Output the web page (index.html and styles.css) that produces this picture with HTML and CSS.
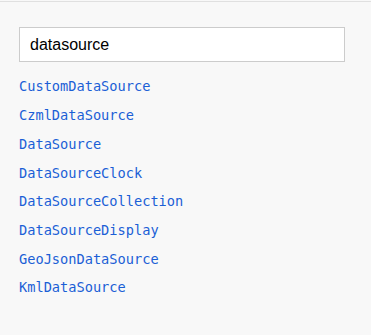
FILE: index.html
```html
<!DOCTYPE html>
<html>
<head>
<meta charset="utf-8">
<link rel="stylesheet" href="styles.css">
</head>
<body>
<div class="panel">
  <input class="search" type="text" value="datasource">
  <ul class="results">
    <li><a href="#">CustomDataSource</a></li>
    <li><a href="#">CzmlDataSource</a></li>
    <li><a href="#">DataSource</a></li>
    <li><a href="#">DataSourceClock</a></li>
    <li><a href="#">DataSourceCollection</a></li>
    <li><a href="#">DataSourceDisplay</a></li>
    <li><a href="#">GeoJsonDataSource</a></li>
    <li><a href="#">KmlDataSource</a></li>
  </ul>
</div>
</body>
</html>
```
FILE: styles.css
```css
html, body {
  margin: 0;
  padding: 0;
  background: #f8f8f8;
  height: 100%;
}
.panel {
  margin-top: 1px;
  border-top: 1px solid #e0e0e0;
  padding: 25px 0 0 19px;
}
.search {
  display: block;
  box-sizing: border-box;
  width: 326px;
  height: 35px;
  margin: 0;
  padding: 0 10px;
  border: 1px solid #cccccc;
  background: #ffffff;
  font-family: "Liberation Sans", Arial, sans-serif;
  font-size: 16px;
  color: #000000;
  outline: none;
}
.results {
  list-style: none;
  margin: 10.4px 0 0 0;
  padding: 0;
}
.results li {
  line-height: 28.7px;
}
.results a {
  font-family: "DejaVu Sans Mono", "Liberation Mono", monospace;
  font-size: 13.65px;
  color: #1b5fd6;
  text-decoration: none;
}
```
